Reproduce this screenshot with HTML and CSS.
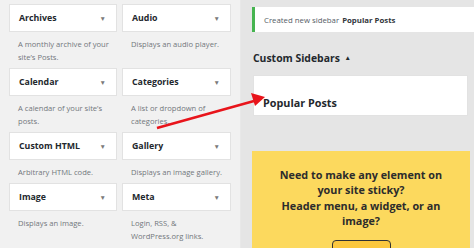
FILE: index.html
```html
<!DOCTYPE html>
<html lang="en">
<head>
  <meta charset="UTF-8">
  <title>Widgets - Custom Sidebars</title>
  <link rel="stylesheet" href="styles.css">
</head>
<body>
  <div class="screen">
    <div class="widget-list">
      <div class="widget">
        <div class="widget-title">Archives <span class="caret">&#9660;</span></div>
        <div class="widget-desc">A monthly archive of your site&rsquo;s Posts.</div>
      </div>
      <div class="widget">
        <div class="widget-title">Audio <span class="caret">&#9660;</span></div>
        <div class="widget-desc">Displays an audio player.</div>
      </div>
      <div class="widget">
        <div class="widget-title">Calendar <span class="caret">&#9660;</span></div>
        <div class="widget-desc">A calendar of your site&rsquo;s posts.</div>
      </div>
      <div class="widget">
        <div class="widget-title">Categories <span class="caret">&#9660;</span></div>
        <div class="widget-desc">A list or dropdown of categories.</div>
      </div>
      <div class="widget">
        <div class="widget-title">Custom HTML <span class="caret">&#9660;</span></div>
        <div class="widget-desc">Arbitrary HTML code.</div>
      </div>
      <div class="widget">
        <div class="widget-title">Gallery <span class="caret">&#9660;</span></div>
        <div class="widget-desc">Displays an image gallery.</div>
      </div>
      <div class="widget">
        <div class="widget-title">Image <span class="caret">&#9660;</span></div>
        <div class="widget-desc">Displays an image.</div>
      </div>
      <div class="widget">
        <div class="widget-title">Meta <span class="caret">&#9660;</span></div>
        <div class="widget-desc">Login, RSS, &amp;<br>WordPress.org links.</div>
      </div>
    </div>

    <div class="sidebars">
      <div class="notice">Created new sidebar <strong>Popular Posts</strong></div>
      <h2 class="section-title">Custom Sidebars <span class="up">&#9650;</span></h2>
      <div class="sidebar-box">Popular Posts</div>
      <div class="promo">
        <p>Need to make any element on your site sticky?<br>Header menu, a widget, or an image?</p>
        <span class="promo-btn"></span>
      </div>
    </div>

    <!-- annotation arrow over both columns -->
    <svg class="arrow" width="474" height="248" viewBox="0 0 474 248">
      <line x1="157" y1="128" x2="254" y2="101" stroke="#e8141b" stroke-width="2.6"/>
      <polygon points="265,97 251,93 255,106" fill="#e8141b"/>
    </svg>
  </div>
</body>
</html>
```

FILE: styles.css
```css
body {
  margin: 0;
  font-family: "Open Sans", "Noto Sans", sans-serif;
  background: #e5e5e5;
  overflow: hidden;
}
.screen {
  position: relative;
  display: flex;
  width: 474px;
  height: 248px;
  overflow: hidden;
}
.widget-list {
  width: 222px;
  padding: 4px 9px 0 9px;
  background: #f1f1f1;
  border-right: 1px solid #e8e8e8;
  display: grid;
  grid-template-columns: 108px 109px;
  column-gap: 5px;
  align-content: start;
}
.widget-title {
  height: 26px;
  border: 1px solid #e2e2e2;
  background: #fff;
  display: flex;
  align-items: center;
  justify-content: space-between;
  padding: 0 10px 0 9px;
  font-size: 8.8px;
  font-weight: 700;
  color: #23282d;
}
.caret {
  font-size: 6.5px;
  color: #7a7a7a;
}
.widget-desc {
  padding: 6px 4px 4px 9px;
  font-size: 7.6px;
  line-height: 13px;
  color: #72777c;
}
.sidebars {
  flex: 1;
  padding: 7px 6px 0 11px;
}
.notice {
  margin-right: -6px;
  height: 25px;
  background: #fff;
  border-left: 3px solid #46b450;
  box-sizing: border-box;
  padding-left: 9px;
  display: flex;
  align-items: center;
  font-size: 7.8px;
  color: #555d66;
}
.notice strong {
  margin-left: 3px;
  color: #32373c;
}
.section-title {
  margin: 17px 0 0 1px;
  font-size: 10.4px;
  line-height: 18px;
  color: #23282d;
}
.up {
  font-size: 6.5px;
  vertical-align: 2px;
  margin-left: 2px;
}
.sidebar-box {
  margin: 8px 0 0 1px;
  height: 41px;
  box-sizing: border-box;
  background: #fff;
  border: 1px solid #e2e2e2;
  padding: 19px 0 0 9px;
  font-size: 10.8px;
  font-weight: 700;
  color: #23282d;
}
.promo {
  margin-top: 35px;
  margin-right: -2px;
  height: 110px;
  background: #fcd95e;
  text-align: center;
  padding-top: 16px;
  box-sizing: border-box;
}
.promo p {
  margin: 0 auto;
  width: 180px;
  font-size: 10.8px;
  font-weight: 700;
  line-height: 15.3px;
  color: #2c2c2c;
}
.promo-btn {
  display: block;
  margin: 12px auto 0;
  width: 57px;
  height: 22px;
  border: 1.5px solid #333;
  border-radius: 4px;
  background: #fcc83e;
}
.arrow {
  position: absolute;
  left: 0;
  top: 0;
  pointer-events: none;
}
```
